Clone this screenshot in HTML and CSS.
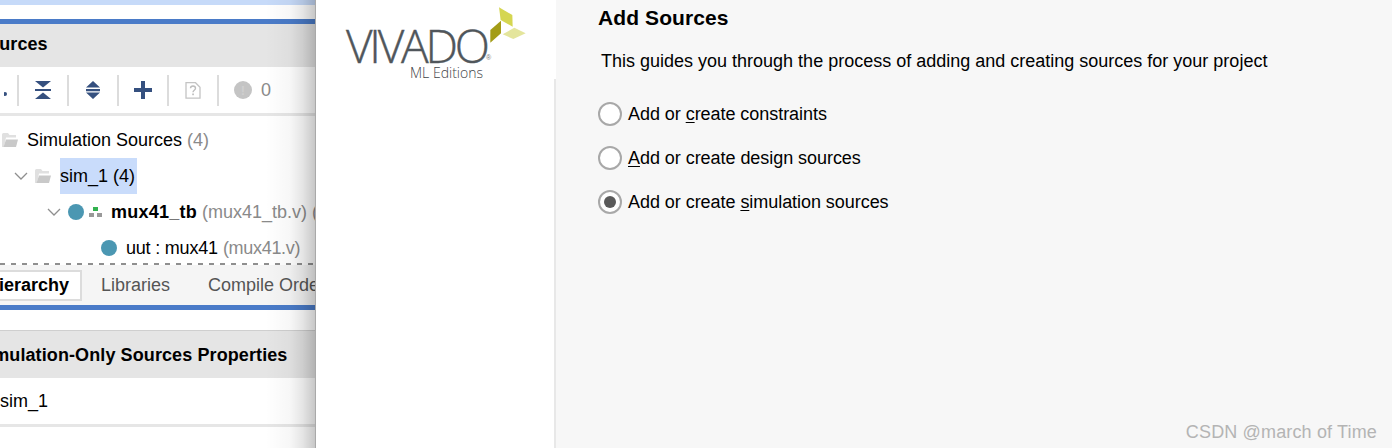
FILE: index.html
```html
<!DOCTYPE html>
<html lang="en">
<head>
<meta charset="utf-8">
<title>Add Sources</title>
<link rel="stylesheet" href="styles.css">
</head>
<body>
<div class="app">
  <section class="bg-panel">
    <div class="selbar"></div>
    <div class="gap14"></div>
    <div class="bluebar"></div>
    <div class="phead"><span class="phead-text sources-title">Sources</span></div>
    <div class="toolbar">
      <span class="tool tool-cut"><svg width="10" height="24" viewBox="0 0 10 24"><circle cx="1" cy="16" r="2" fill="#35507f"/></svg></span>
      <span class="sep"></span>
      <span class="tool"><svg width="16" height="18" viewBox="0 0 16 18"><path d="M0 0h16L8 6.500zM0 8h16v2H0zM8 11.500l8 6.500H0z" fill="#35507f"/></svg></span>
      <span class="sep"></span>
      <span class="tool"><svg width="14" height="18" viewBox="0 0 14 18"><path d="M7 0l7 6.500H0zM0 8h14v2.200H0zM0 11.500h14L7 18z" fill="#35507f"/></svg></span>
      <span class="sep"></span>
      <span class="tool"><svg width="18" height="18" viewBox="0 0 18 18"><path d="M7 0h4v7h7v4h-7v7H7v-7H0V7h7z" fill="#35507f"/></svg></span>
      <span class="sep"></span>
      <span class="tool"><svg width="16" height="17" viewBox="0 0 16 17"><path d="M1 .7h9.500l4.500 4.500v11H1z" fill="none" stroke="#c4c4c4" stroke-width="1.300"/><path d="M5.500 6.200c0-3 5-3 5 0 0 2-2.500 2-2.500 4" fill="none" stroke="#bdbdbd" stroke-width="1.400"/><rect x="7.200" y="11.500" width="1.700" height="1.700" fill="#bdbdbd"/></svg></span>
      <span class="sep"></span>
      <span class="tool tool-e"><span class="alert">!</span><span class="count">0</span></span>
    </div>
    <div class="rule3"></div>
    <div class="tree">
      <div class="row row-0">
        <svg class="folder" width="16" height="14" viewBox="0 0 16 14"><path d="M0 1.500Q0 0 1.500 0H6l1.500 2H14v2.500H4L2 14H0z" fill="#e0e0e0"/><path d="M4 6.500H16L14 14H1.500z" fill="#c9c9c9"/></svg>
        <span class="name">Simulation Sources</span>&nbsp;<span class="muted">(4)</span>
      </div>
      <div class="row row-1">
        <svg class="chev" width="14" height="8" viewBox="0 0 14 8"><path d="M1 1l6 6 6-6" fill="none" stroke="#8f8f8f" stroke-width="1.300"/></svg>
        <svg class="folder" width="16" height="14" viewBox="0 0 16 14"><path d="M0 1.500Q0 0 1.500 0H6l1.500 2H14v2.500H4L2 14H0z" fill="#e0e0e0"/><path d="M4 6.500H16L14 14H1.500z" fill="#c9c9c9"/></svg>
        <span class="selected">sim_1 (4)</span>
      </div>
      <div class="row row-2">
        <svg class="chev" width="14" height="8" viewBox="0 0 14 8"><path d="M1 1l6 6 6-6" fill="none" stroke="#8f8f8f" stroke-width="1.300"/></svg>
        <span class="dot"></span>
        <svg class="hier" width="13" height="10" viewBox="0 0 13 10"><rect x="4" y="0" width="5" height="4" fill="#32b24f"/><rect x="0" y="6" width="5" height="4" fill="#999"/><rect x="8" y="6" width="5" height="4" fill="#999"/></svg>
        <b class="bold-name">mux41_tb</b>&nbsp;<span class="muted">(mux41_tb.v) (</span>
      </div>
      <div class="row row-3">
        <span class="dot"></span>
        <span class="name uut">uut : mux41</span>&nbsp;<span class="muted muted-tight">(mux41.v)</span>
      </div>
    </div>
    <div class="tabs">
      <span class="tab tab-on">Hierarchy</span>
      <span class="tab tab-lib">Libraries</span>
      <span class="tab tab-order">Compile Order</span>
    </div>
    <div class="bluebar"></div>
    <div class="gap20"></div>
    <div class="phead phead-b"><span class="phead-text props-title">Simulation-Only Sources Properties</span></div>
    <div class="prop-row"><span class="prop-val">sim_1</span></div>
    <div class="rule3"></div>
    <div class="shade"></div>
  </section>

  <section class="dialog">
    <aside class="side">
      <div class="logo">
        <span class="vivado">VIVADO</span>
        <span class="reg">®</span>
        <svg class="mark" width="38" height="38" viewBox="507 18 114 114"><path d="M537 22L577 45L578 80L542 60z" fill="#d5d651"/><path d="M543 62L511 90L511 128L543 100z" fill="#a39c17"/><path d="M548 103L583 83L617 100L580 117z" fill="#e4e59c"/></svg>
        <span class="edition">ML Editions</span>
      </div>
      <div class="side-body"></div>
    </aside>
    <main class="content">
      <h1 class="title">Add Sources</h1>
      <p class="desc">This guides you through the process of adding and creating sources for your project</p>
      <div class="options">
        <label class="opt"><span class="radio"></span><span>Add or <u>c</u>reate constraints</span></label>
        <label class="opt"><span class="radio"></span><span><u>A</u>dd or create design sources</span></label>
        <label class="opt"><span class="radio radio-on"></span><span>Add or create <u>s</u>imulation sources</span></label>
      </div>
    </main>
  </section>
</div>
<div class="watermark">CSDN @march of Time</div>
</body>
</html>
```

FILE: styles.css
```css
* { box-sizing: border-box; }
html, body { margin: 0; height: 100%; overflow: hidden; }
body { font-family: "Liberation Sans", Arial, sans-serif; font-size: 18px; color: #000; background: #fff; }
.app { display: flex; width: 1392px; height: 448px; }

.bg-panel { position: relative; width: 316px; height: 448px; flex: none; overflow: hidden; background: #fff; border-right: 1px solid #a9a9a9; display: flex; flex-direction: column; }
.selbar { height: 5px; background: #c6daf9; flex: none; }
.gap14 { height: 14px; flex: none; }
.gap20 { height: 21px; flex: none; border-bottom: 1px solid #cfcfcf; }
.bluebar { height: 5px; background: #4a7bc8; flex: none; }
.phead { height: 43px; flex: none; background: #e5e5e5; display: flex; align-items: center; white-space: nowrap; padding-bottom: 2px; }
.phead-b { height: 47px; padding-bottom: 0; padding-top: 1px; }
.phead-text { font-weight: 700; font-size: 18px; letter-spacing: .1px; }
.sources-title { margin-left: -24px; }
.props-title { margin-left: -24px; }
.toolbar { height: 46px; flex: none; display: flex; align-items: center; white-space: nowrap; }
.tool { display: flex; align-items: center; justify-content: center; flex: none; width: 48px; }
.tool-cut { width: 17px; }
.tool-e { width: auto; margin-left: 15px; gap: 9px; }
.sep { width: 2px; height: 31px; background: #dcdcdc; flex: none; }
.alert { width: 18px; height: 18px; border-radius: 50%; background: #c4c4c4; color: #cfcfcf; font-size: 13px; font-weight: 700; display: flex; align-items: center; justify-content: center; }
.count { color: #8a8a8a; }
.rule3 { height: 3px; background: #e6e6e6; flex: none; }

.tree { height: 149px; flex: none; padding-top: 6px; overflow: hidden; background: repeating-linear-gradient(to right, #8f8f8f 0 5px, transparent 5px 11px) left bottom / 100% 2px no-repeat; }
.row { height: 36px; display: flex; align-items: center; white-space: nowrap; }
.muted { color: #8a8a8a; }
.muted-tight { letter-spacing: -.3px; }
.row-0 { padding-left: 2px; }
.folder { margin-right: 9px; flex: none; }
.row-1 { padding-left: 14px; }
.chev { margin-right: 7px; flex: none; }
.selected { height: 36px; width: 77px; display: flex; align-items: center; background: #c9dcfb; }
.row-2 { padding-left: 47px; }
.dot { width: 16px; height: 16px; border-radius: 50%; background: #4b97b2; flex: none; }
.hier { margin: 0 9px 0 5px; flex: none; }
.bold-name { font-weight: 700; letter-spacing: .25px; }
.row-3 { padding-left: 101px; }
.uut { margin-left: 9px; letter-spacing: -.2px; }

.tabs { height: 40px; flex: none; background: #f5f5f5; display: flex; align-items: center; white-space: nowrap; }
.tab { color: #555; flex: none; }
.tab-on { margin-left: -18px; width: 100px; height: 31px; line-height: 27px; padding-left: 2px; background: #fff; color: #000; font-weight: 700; border: 2px solid #dcdcdc; }
.tab-lib { margin-left: 19px; }
.tab-order { margin-left: 38px; }
.prop-row { height: 46px; flex: none; display: flex; align-items: center; }
.prop-val { margin-left: 0; }
.shade { position: absolute; top: 0; right: 0; bottom: 0; width: 50px; background: linear-gradient(to right, rgba(0,0,0,0), rgba(0,0,0,.03) 50%, rgba(0,0,0,.1) 75%, rgba(0,0,0,.22)); pointer-events: none; }

.dialog { flex: 1; display: flex; min-width: 0; }
.side { width: 240px; flex: none; display: flex; flex-direction: column; background: #fff; }
.logo { position: relative; height: 79px; flex: none; }
.vivado { position: absolute; left: 30px; top: 27px; font-family: "Open Sans", sans-serif; font-weight: 300; font-size: 46px; line-height: 36px; letter-spacing: -3.2px; color: #50565b; -webkit-text-stroke: .4px #50565b; }
.reg { position: absolute; left: 170px; top: 54px; font-size: 7px; color: #777; }
.mark { position: absolute; left: 173px; top: 6px; }
.edition { position: absolute; left: 94px; top: 65px; font-family: "Open Sans", sans-serif; font-weight: 300; font-size: 14px; line-height: 16px; color: #3f4347; }
.side-body { flex: 1; border-right: 2px solid #e8e8e8; }

.content { flex: 1; min-width: 0; background: #f7f7f7; padding-left: 42px; }
.title { margin: 6px 0 0; font-size: 21px; line-height: 24px; font-weight: 700; letter-spacing: .1px; }
.desc { margin: 19px 0 0 3px; line-height: 24px; font-size: 18px; }
.options { margin-top: 19px; display: flex; flex-direction: column; }
.opt { height: 44px; display: flex; align-items: center; gap: 6px; letter-spacing: -.05px; }
.opt u { text-underline-offset: 2px; }
.radio { width: 24px; height: 24px; border-radius: 50%; border: 2px solid #a8a8a8; background: #fff; flex: none; display: flex; align-items: center; justify-content: center; }
.radio-on::after { content: ""; width: 12px; height: 12px; border-radius: 50%; background: #5a5a5a; }
.watermark { position: absolute; right: 15px; top: 421px; font-size: 18px; line-height: 22px; letter-spacing: .15px; color: #b4b4b4; }
```
